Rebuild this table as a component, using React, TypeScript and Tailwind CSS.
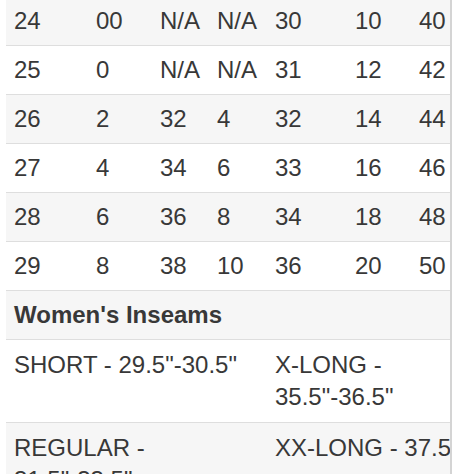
const sizes = [
  ['24', '00', 'N/A', 'N/A', '30', '10', '40'],
  ['25', '0', 'N/A', 'N/A', '31', '12', '42'],
  ['26', '2', '32', '4', '32', '14', '44'],
  ['27', '4', '34', '6', '33', '16', '46'],
  ['28', '6', '36', '8', '34', '18', '48'],
  ['29', '8', '38', '10', '36', '20', '50'],
]

export default function App() {
  return (
    <div
      className="w-[474px] h-[474px] overflow-hidden bg-white pl-[6px] text-[#383838] text-[24px]"
      style={{ fontFamily: '"Liberation Sans", Arial, sans-serif' }}
    >
      <div className="w-[446px] -mt-[3px] border-r-2 border-[#d4d4d4] overflow-hidden">
        {sizes.map((row, i) => (
          <div
            key={row[0]}
            className={`grid grid-cols-[82px_64px_57px_58px_80px_64px_1fr] border-b border-[#dedede] ${
              i % 2 === 0 ? 'bg-[#f6f6f6]' : 'bg-white'
            }`}
          >
            {row.map((cell, j) => (
              <div key={j} className="px-2 py-2 leading-8 whitespace-nowrap">
                {cell}
              </div>
            ))}
          </div>
        ))}

        <div className="bg-[#f6f6f6] border-b border-[#dedede] px-2 py-2 leading-8 font-bold">
          Women's Inseams
        </div>

        <div className="grid grid-cols-[261px_1fr] border-b border-[#dedede] bg-white">
          <div className="px-2 py-[9px] leading-8 whitespace-nowrap">SHORT - 29.5"-30.5"</div>
          <div className="px-2 py-[9px] leading-8">
            X-LONG -<br />
            35.5"-36.5"
          </div>
        </div>

        <div className="grid grid-cols-[261px_185px] bg-[#f6f6f6]">
          <div className="px-2 py-[9px] leading-8">
            REGULAR -<br />
            31.5"-33.5"
          </div>
          <div className="px-2 py-[9px] leading-8 whitespace-nowrap overflow-hidden">
            XX-LONG - 37.5"
          </div>
        </div>
      </div>
    </div>
  )
}
